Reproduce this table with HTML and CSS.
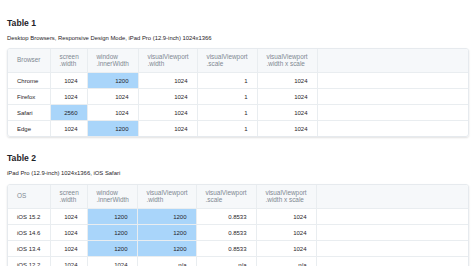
FILE: index.html
```html
<!DOCTYPE html>
<html lang="en">
<head>
  <meta charset="UTF-8" />
  <meta name="viewport" content="width=device-width, initial-scale=1.0" />
  <title>Viewport Tables</title>
  <link rel="stylesheet" href="styles.css">
</head>
<body>
<section class="block">
  <h2 class="block-title">Table 1</h2>
  <p class="block-desc">Desktop Browsers, Responsive Design Mode, iPad Pro (12.9-inch) 1024x1366</p>
  <div class="table-wrap">
    <table class="data">
      <colgroup>
        <col class="c-name"><col class="c-screen"><col class="c-inner"><col class="c-vvw"><col class="c-scale"><col class="c-prod"><col>
      </colgroup>
      <thead>
        <tr>
          <th>Browser</th>
          <th>screen<br>.width</th>
          <th>window<br>.innerWidth</th>
          <th>visualViewport<br>.width</th>
          <th>visualViewport<br>.scale</th>
          <th>visualViewport<br>.width x scale</th>
          <th></th>
        </tr>
      </thead>
      <tbody>
        <tr><td class="name">Chrome</td><td>1024</td><td class="hl">1200</td><td>1024</td><td>1</td><td>1024</td><td></td></tr>
        <tr><td class="name">Firefox</td><td>1024</td><td>1024</td><td>1024</td><td>1</td><td>1024</td><td></td></tr>
        <tr><td class="name">Safari</td><td class="hl">2560</td><td>1024</td><td>1024</td><td>1</td><td>1024</td><td></td></tr>
        <tr><td class="name">Edge</td><td>1024</td><td class="hl">1200</td><td>1024</td><td>1</td><td>1024</td><td></td></tr>
      </tbody>
    </table>
  </div>
</section>

<section class="block second">
  <h2 class="block-title">Table 2</h2>
  <p class="block-desc">iPad Pro (12.9-inch) 1024x1366, iOS Safari</p>
  <div class="table-wrap">
    <table class="data">
      <colgroup>
        <col class="c-name"><col class="c-screen"><col class="c-inner2"><col class="c-vvw"><col class="c-scale2"><col class="c-prod"><col>
      </colgroup>
      <thead>
        <tr>
          <th>OS</th>
          <th>screen<br>.width</th>
          <th>window<br>.innerWidth</th>
          <th>visualViewport<br>.width</th>
          <th>visualViewport<br>.scale</th>
          <th>visualViewport<br>.width x scale</th>
          <th></th>
        </tr>
      </thead>
      <tbody>
        <tr><td class="name">iOS 15.2</td><td>1024</td><td class="hl">1200</td><td class="hl">1200</td><td>0.8533</td><td>1024</td><td></td></tr>
        <tr><td class="name">iOS 14.6</td><td>1024</td><td class="hl">1200</td><td class="hl">1200</td><td>0.8533</td><td>1024</td><td></td></tr>
        <tr><td class="name">iOS 13.4</td><td>1024</td><td class="hl">1200</td><td class="hl">1200</td><td>0.8533</td><td>1024</td><td></td></tr>
        <tr><td class="name">iOS 12.2</td><td>1024</td><td>1024</td><td>n/a</td><td>n/a</td><td>n/a</td><td></td></tr>
      </tbody>
    </table>
  </div>
</section>
</body>
</html>
```

FILE: styles.css
```css
body {
  margin: 0;
  padding: 0 5px 0 7px;
  background: #ffffff;
  color: #1f2328;
  font-family: "Liberation Sans", Arial, sans-serif;
}
.block-title {
  font-size: 8.6px;
  line-height: 12px;
  font-weight: 700;
  margin: 17px 0 0;
}
.second .block-title {
  margin-top: 15px;
}
.block-desc {
  font-size: 5.9px;
  line-height: 8px;
  margin: 5px 0 6px;
}
.second .block-desc {
  margin-bottom: 7px;
}
.table-wrap {
  border: 1px solid #e6eaee;
  border-radius: 3px;
  box-shadow: 0 1px 2px rgba(0, 0, 0, 0.12);
  overflow: hidden;
}
.data {
  width: 100%;
  table-layout: fixed;
  border-collapse: collapse;
  font-size: 6px;
}
.c-name { width: 42px; }
.c-screen { width: 37px; }
.c-inner { width: 51px; }
.c-inner2 { width: 50px; }
.c-vvw { width: 59px; }
.c-scale { width: 60px; }
.c-scale2 { width: 60px; }
.c-prod { width: 60px; }
.data th {
  background: #f6f8fa;
  color: #7f8892;
  font-size: 6.4px;
  font-weight: 400;
  text-align: left;
  line-height: 6.8px;
  height: 23px;
  padding: 0 9px;
  border-right: 1px solid #e9edf0;
}
.data td {
  height: 15px;
  line-height: 8px;
  padding: 0 9px 0 9px;
  text-align: right;
  border-top: 1px solid #e9edf0;
  border-right: 1px solid #e9edf0;
  white-space: nowrap;
}
.data td.name {
  text-align: left;
}
.data th:last-child,
.data td:last-child {
  border-right: none;
}
.data td.hl {
  background: #a9d5fa;
}
```
